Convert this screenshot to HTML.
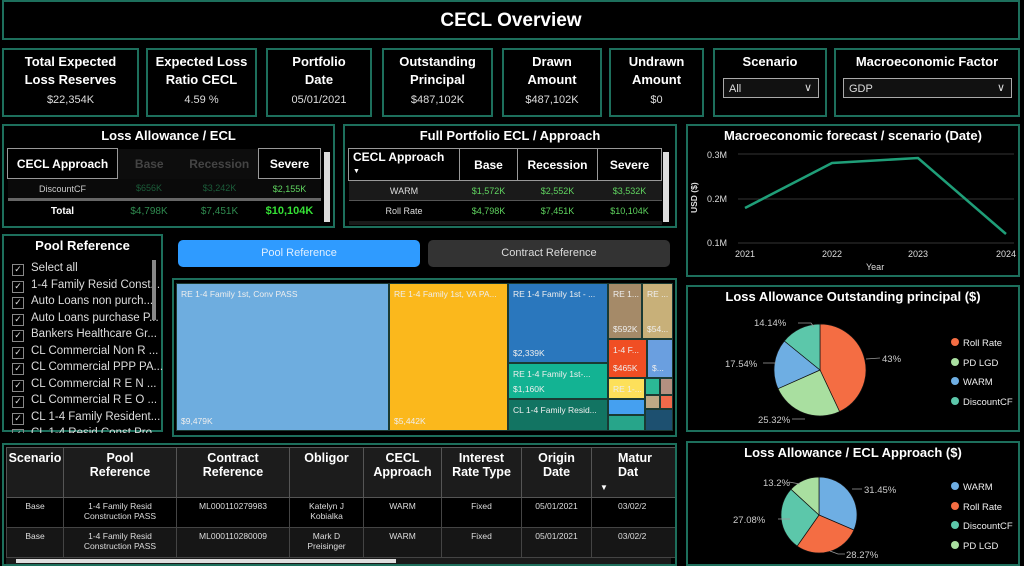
<!DOCTYPE html>
<html><head><meta charset="utf-8"><style>
*{box-sizing:border-box;margin:0;padding:0}
body{width:1024px;height:566px;background:#000;position:relative;overflow:hidden;font-family:"Liberation Sans",sans-serif;color:#fff}
.b{position:absolute;border:2px solid #1d6f5c;background:#000}
.kt{font-weight:bold;font-size:13px;text-align:center;line-height:18px;margin-top:3px}
.kv{font-size:11px;text-align:center;position:absolute;bottom:9px;width:100%;color:#ddd}
.ttl{font-weight:bold;font-size:13px;text-align:center;margin-top:2px}
.a{position:absolute}
table{border-collapse:collapse;table-layout:fixed}
td{overflow:hidden}
.dd{position:absolute;border:1px solid #aaa;background:#111;height:20px;font-size:11px;color:#ddd;padding:4px 5px}
.dd:after{content:"\2228";position:absolute;right:6px;top:2px;font-size:11px}
.pl{position:absolute;font-size:12px;color:#eee;white-space:nowrap}
.pl i{display:inline-block;width:8px;height:8px;border-radius:50%;margin-right:4px}
.tm{position:absolute;font-size:8.5px;color:#eee;padding:5px 4px;overflow:hidden;white-space:nowrap;border:1px solid #1a3a33}
.tm b{position:absolute;bottom:4px;left:4px;font-weight:normal}
.cb{font-size:11.5px;color:#ddd;height:16.5px;line-height:16.5px;white-space:nowrap}
.cb:before{content:"\2713";display:inline-block;width:10px;height:10px;border:1px solid #888;font-size:9px;line-height:9px;text-align:center;margin-right:7px;vertical-align:-1px}
.bt td{border:1px solid #444;padding-top:3px}
</style></head><body>
<div class="b" style="left:2px;top:0;width:1018px;height:40px"><div style="font-weight:bold;font-size:19px;text-align:center;margin-top:8px">CECL Overview</div></div>

<div class="b" style="left:2px;top:48px;width:137px;height:69px"><div class="kt">Total Expected<br>Loss Reserves</div><div class="kv">$22,354K</div></div>
<div class="b" style="left:146px;top:48px;width:111px;height:69px"><div class="kt">Expected Loss<br>Ratio CECL</div><div class="kv">4.59 %</div></div>
<div class="b" style="left:266px;top:48px;width:106px;height:69px"><div class="kt">Portfolio<br>Date</div><div class="kv">05/01/2021</div></div>
<div class="b" style="left:382px;top:48px;width:111px;height:69px"><div class="kt">Outstanding<br>Principal</div><div class="kv">$487,102K</div></div>
<div class="b" style="left:502px;top:48px;width:100px;height:69px"><div class="kt">Drawn<br>Amount</div><div class="kv">$487,102K</div></div>
<div class="b" style="left:609px;top:48px;width:95px;height:69px"><div class="kt">Undrawn<br>Amount</div><div class="kv">$0</div></div>
<div class="b" style="left:713px;top:48px;width:114px;height:69px"><div class="kt">Scenario</div><div class="dd" style="left:8px;top:28px;width:96px">All</div></div>
<div class="b" style="left:834px;top:48px;width:186px;height:69px"><div class="kt">Macroeconomic Factor</div><div class="dd" style="left:7px;top:28px;width:169px">GDP</div></div>

<div class="b" style="left:2px;top:124px;width:333px;height:104px"><div class="ttl">Loss Allowance / ECL</div>
<table class="a" style="left:3px;top:22px;width:313px;font-size:9px;color:#ccc;text-align:center">
<tr style="height:30px;font-weight:bold;font-size:12px"><td style="width:110px;border:1px solid #999;color:#fff;white-space:nowrap">CECL Approach</td><td style="width:63px;color:#444;background:#0d0d0d">Base</td><td style="width:78px;color:#444;background:#0d0d0d">Recession</td><td style="width:62px;border:1px solid #999;color:#fff">Severe</td></tr>
<tr style="height:21px;background:#0a0a0a"><td>DiscountCF</td><td style="color:#1c5d3a">$656K</td><td style="color:#1c5d3a">$3,242K</td><td style="color:#5fd35f">$2,155K</td></tr>
<tr style="height:22px;font-size:10px;border-top:3px solid #666"><td style="color:#fff;font-weight:bold">Total</td><td style="color:#2f8a4f">$4,798K</td><td style="color:#2f8a4f">$7,451K</td><td style="color:#35e035;font-weight:bold;font-size:11px">$10,104K</td></tr>
</table><div class="a" style="left:320px;top:26px;width:6px;height:70px;background:#ddd"></div></div>

<div class="b" style="left:343px;top:124px;width:334px;height:104px"><div class="ttl">Full Portfolio ECL / Approach</div>
<table class="a" style="left:3px;top:22px;width:313px;font-size:9px;color:#ddd;text-align:center">
<tr style="height:32px;font-weight:bold;font-size:12px;color:#fff"><td style="width:111px;text-align:left;padding-left:4px;border:1px solid #999;white-space:nowrap;line-height:12px">CECL Approach<br><span style="font-size:7px">▼</span></td><td style="width:58px;border:1px solid #999">Base</td><td style="width:80px;border:1px solid #999">Recession</td><td style="width:64px;border:1px solid #999">Severe</td></tr>
<tr style="height:20px;background:#1a1a1a"><td>WARM</td><td style="color:#5fd35f">$1,572K</td><td style="color:#5fd35f">$2,552K</td><td style="color:#5fd35f">$3,532K</td></tr>
<tr style="height:20px;border-top:1px solid #555"><td>Roll Rate</td><td style="color:#5fd35f">$4,798K</td><td style="color:#5fd35f">$7,451K</td><td style="color:#5fd35f">$10,104K</td></tr>
<tr style="height:4px;background:#1a1a1a"><td colspan="4"></td></tr>
</table><div class="a" style="left:318px;top:26px;width:6px;height:70px;background:#ddd"></div></div>

<div class="b" style="left:686px;top:124px;width:334px;height:153px"><div class="ttl">Macroeconomic forecast / scenario (Date)</div></div>
<svg class="a" style="left:0;top:0" width="1024" height="566">
<g stroke="#333" stroke-width="1"><line x1="738" y1="154" x2="1014" y2="154"/><line x1="738" y1="199" x2="1014" y2="199"/><line x1="738" y1="243" x2="1014" y2="243"/></g>
<polyline points="745,208 832,163 918,158 1006,234" fill="none" stroke="#1f9e78" stroke-width="2.5"/>
<g font-family="Liberation Sans" font-size="9" fill="#ddd"><text x="707" y="158">0.3M</text><text x="707" y="202">0.2M</text><text x="707" y="246">0.1M</text>
<text x="735" y="257">2021</text><text x="822" y="257">2022</text><text x="908" y="257">2023</text><text x="996" y="257">2024</text><text x="866" y="270">Year</text>
<text transform="translate(697,213) rotate(-90)" font-weight="bold" font-size="8.5">USD ($)</text></g>
</svg>

<div class="b" style="left:2px;top:234px;width:161px;height:198px"><div class="ttl">Pool Reference</div>
<div class="a" style="left:8px;top:24px">
<div class="cb">Select all</div><div class="cb">1-4 Family Resid Const...</div><div class="cb">Auto Loans non purch...</div><div class="cb">Auto Loans purchase P...</div><div class="cb">Bankers Healthcare Gr...</div><div class="cb">CL Commercial Non R ...</div><div class="cb">CL Commercial PPP PA...</div><div class="cb">CL Commercial R E N ...</div><div class="cb">CL Commercial R E O ...</div><div class="cb">CL 1-4 Family Resident...</div><div class="cb" style="height:8px;overflow:hidden">CL 1-4 Resid Const Pro</div></div>
<div class="a" style="left:148px;top:24px;width:4px;height:60px;background:#888"></div></div>

<div class="a" style="left:178px;top:240px;width:242px;height:27px;background:#2f9bff;border-radius:5px;font-size:11px;text-align:center;line-height:27px;color:#dfefff">Pool Reference</div>
<div class="a" style="left:428px;top:240px;width:242px;height:27px;background:#333;border-radius:5px;font-size:11px;text-align:center;line-height:27px;color:#ddd">Contract Reference</div>

<div class="b" style="left:172px;top:278px;width:505px;height:159px">
<div class="tm" style="left:2px;top:3px;width:213px;height:148px;background:#6eaddf">RE 1-4 Family 1st, Conv PASS<b>$9,479K</b></div>
<div class="tm" style="left:215px;top:3px;width:119px;height:148px;background:#fbb81c">RE 1-4 Family 1st, VA PA...<b>$5,442K</b></div>
<div class="tm" style="left:334px;top:3px;width:100px;height:80px;background:#2a77bd">RE 1-4 Family 1st - ...<b>$2,339K</b></div>
<div class="tm" style="left:334px;top:83px;width:100px;height:36px;background:#13b393">RE 1-4 Family 1st-...<b>$1,160K</b></div>
<div class="tm" style="left:334px;top:119px;width:100px;height:32px;background:#127462">CL 1-4 Family Resid...</div>
<div class="tm" style="left:434px;top:3px;width:34px;height:56px;background:#a58a68">RE 1...<b>$592K</b></div>
<div class="tm" style="left:468px;top:3px;width:31px;height:56px;background:#c8b079">RE ...<b>$54...</b></div>
<div class="tm" style="left:434px;top:59px;width:39px;height:39px;background:#f04e23">1-4 F...<b>$465K</b></div>
<div class="tm" style="left:473px;top:59px;width:26px;height:39px;background:#6a9fe0"><b>$...</b></div>
<div class="tm" style="left:434px;top:98px;width:37px;height:21px;background:#fde05a">RE 1-...</div>
<div class="tm" style="left:434px;top:119px;width:37px;height:16px;background:#45a0f0"></div>
<div class="tm" style="left:434px;top:135px;width:37px;height:16px;background:#27a58a"></div>
<div class="tm" style="left:471px;top:98px;width:15px;height:17px;background:#2bb895"></div>
<div class="tm" style="left:486px;top:98px;width:13px;height:17px;background:#b39080"></div>
<div class="tm" style="left:471px;top:115px;width:15px;height:14px;background:#bda985"></div>
<div class="tm" style="left:486px;top:115px;width:13px;height:14px;background:#f06a4a"></div>
<div class="tm" style="left:471px;top:129px;width:28px;height:22px;background:#1d5070"></div>
</div>

<div class="b" style="left:686px;top:285px;width:334px;height:147px"><div class="ttl">Loss Allowance Outstanding principal ($)</div></div>
<div class="b" style="left:686px;top:441px;width:334px;height:125px"><div class="ttl">Loss Allowance / ECL Approach ($)</div></div>
<svg class="a" style="left:0;top:0" width="1024" height="566">
<g stroke="#111" stroke-width="0.7">
<path d="M820,370 L820,324 A46,46 0 0 1 839.6,411.6 Z" fill="#f46d43"/>
<path d="M820,370 L839.6,411.6 A46,46 0 0 1 778,388.7 Z" fill="#a9dfa0"/>
<path d="M820,370 L778,388.7 A46,46 0 0 1 784.3,341 Z" fill="#6eaee3"/>
<path d="M820,370 L784.3,341 A46,46 0 0 1 820,324 Z" fill="#5cc7aa"/>
<path d="M819,515 L819,477 A38,38 0 0 1 853.9,530 Z" fill="#6eaee3"/>
<path d="M819,515 L853.9,530 A38,38 0 0 1 797.2,546.1 Z" fill="#f46d43"/>
<path d="M819,515 L797.2,546.1 A38,38 0 0 1 791,489.3 Z" fill="#5cc7aa"/>
<path d="M819,515 L791,489.3 A38,38 0 0 1 819,477 Z" fill="#a9dfa0"/>
</g>
<g stroke="#999" fill="none" stroke-width="0.8">
<polyline points="798,323 811,323 814,327"/><polyline points="763,363 776,363"/><polyline points="792,419 805,419"/><polyline points="866,359 880,358"/>
<polyline points="789,482 800,484"/><polyline points="778,519 790,519"/><polyline points="852,489 862,489"/><polyline points="830,551 838,554 845,554"/>
</g>
<g font-family="Liberation Sans" font-size="9.5" fill="#ccc">
<text x="754" y="326">14.14%</text><text x="725" y="367">17.54%</text><text x="758" y="423">25.32%</text><text x="882" y="362">43%</text>
<text x="763" y="486">13.2%</text><text x="733" y="523">27.08%</text><text x="864" y="493">31.45%</text><text x="846" y="558">28.27%</text></g>
</svg>
<div class="pl" style="left:951px;top:334px;font-size:9.5px;line-height:19.5px"><div><i style="background:#f46d43"></i>Roll Rate</div><div><i style="background:#a9dfa0"></i>PD LGD</div><div><i style="background:#6eaee3"></i>WARM</div><div><i style="background:#5cc7aa"></i>DiscountCF</div></div>
<div class="pl" style="left:951px;top:478px;font-size:9.5px;line-height:19.5px"><div><i style="background:#6eaee3"></i>WARM</div><div><i style="background:#f46d43"></i>Roll Rate</div><div><i style="background:#5cc7aa"></i>DiscountCF</div><div><i style="background:#a9dfa0"></i>PD LGD</div></div>

<div class="b" style="left:2px;top:443px;width:675px;height:123px;overflow:hidden">
<table class="a bt" style="left:2px;top:2px;width:700px;text-align:center;color:#ddd;font-size:8.5px">
<tr style="height:50px;background:#1c1c1c;font-weight:bold;font-size:12.5px;color:#fff;vertical-align:top">
<td style="width:57px;border-color:#555">Scenario</td><td style="width:113px;border-color:#555">Pool<br>Reference</td><td style="width:113px;border-color:#555">Contract<br>Reference</td><td style="width:74px;border-color:#555">Obligor</td><td style="width:78px;border-color:#555">CECL<br>Approach</td><td style="width:80px;border-color:#555">Interest<br>Rate Type</td><td style="width:70px;border-color:#555">Origin<br>Date</td><td style="width:115px;border-color:#555;text-align:left;padding-left:26px;white-space:nowrap">Matur<br>Dat<br><span style="font-size:8px;margin-left:-18px">▼</span></td></tr>
<tr style="height:30px;background:#000;vertical-align:top"><td>Base</td><td>1-4 Family Resid<br>Construction PASS</td><td>ML000110279983</td><td>Katelyn J<br>Kobialka</td><td>WARM</td><td>Fixed</td><td>05/01/2021</td><td style="text-align:left;padding-left:26px">03/02/2</td></tr>
<tr style="height:30px;background:#161616;vertical-align:top"><td>Base</td><td>1-4 Family Resid<br>Construction PASS</td><td>ML000110280009</td><td>Mark D<br>Preisinger</td><td>WARM</td><td>Fixed</td><td>05/01/2021</td><td style="text-align:left;padding-left:26px">03/02/2</td></tr>
</table>
<div class="a" style="left:2px;top:113px;width:665px;height:6px;background:#1a1a1a"></div>
<div class="a" style="left:12px;top:114px;width:380px;height:4px;background:#ddd"></div>
</div>
</body></html>
